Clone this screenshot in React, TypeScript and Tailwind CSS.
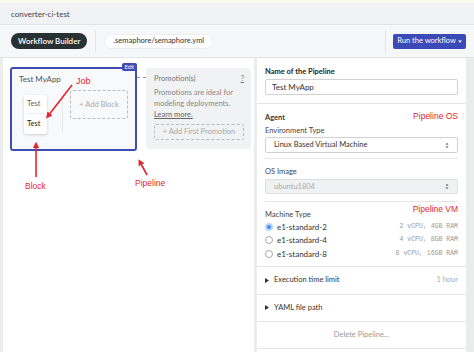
import React from 'react';

const font = { fontFamily: 'Lato, "Open Sans", sans-serif' };

const machines = [
  { name: 'e1-standard-2', spec: '2 vCPU, 4GB RAM', checked: true },
  { name: 'e1-standard-4', spec: '4 vCPU, 8GB RAM', checked: false },
  { name: 'e1-standard-8', spec: '8 vCPU, 16GB RAM', checked: false },
];

const Annotation: React.FC<{ className: string; children: React.ReactNode }> = ({ className, children }) => (
  <span className={`absolute text-[8.5px] leading-none text-[#e3262d] font-['Liberation_Sans',Arial,sans-serif] ${className}`}>
    {children}
  </span>
);

const SelectArrows = () => (
  <svg width="4" height="7" viewBox="0 0 4 7" className="text-[#444]">
    <path d="M0.5 2.6 L2 1 L3.5 2.6 Z M0.5 4.4 L2 6 L3.5 4.4 Z" fill="currentColor" />
  </svg>
);

const App: React.FC = () => {
  return (
    <div className="w-[474px] h-[352px] overflow-hidden bg-[#ebecec] flex flex-col text-[#333]" style={font}>
      <div className="h-[3px] bg-[#fbf8ec]" />
      <div className="h-[22px] bg-[#f1f2f3] border-b border-[#e0e2e3] px-[11px] flex items-center text-[8px] text-[#444]">
        converter-ci-test
      </div>

      {/* toolbar */}
      <div className="h-[33px] bg-[#f6f7f8] border-b border-[#e0e2e3] flex items-center pl-[11px] pr-[8px]">
        <div className="h-[16px] px-[7px] rounded-full bg-[#283234] text-white text-[8px] font-semibold flex items-center">
          Workflow Builder
        </div>
        <div className="w-px h-[22px] bg-[#e2e4e5] mx-[8px]" />
        <div className="h-[15px] px-[8px] rounded-full bg-white border border-[#eceeef] text-[7.5px] text-[#333] flex items-center">
          .semaphore/semaphore.yml
        </div>
        <div className="flex-1" />
        <div className="w-px h-[22px] bg-[#e2e4e5] mr-[7px]" />
        <div className="h-[15px] w-[73px] rounded-[2px] bg-[#3b4ab6] text-white text-[7.5px] flex items-center justify-center gap-[2px]">
          Run the workflow
          <svg width="4" height="3" viewBox="0 0 4 3"><path d="M0 0.5 H4 L2 2.8 Z" fill="white" /></svg>
        </div>
      </div>

      <div className="flex-1 flex">
        {/* canvas */}
        <div className="relative ml-[3px] w-[251px] bg-white pt-[9px] pl-[7px]">
          <div className="flex items-start">
            <div className="relative w-[127px] h-[84px] border-2 border-[#3f4db3] rounded-[3px] bg-[#f8f9fa] pl-[7px] pt-[5px]">
              <div className="absolute -top-[6px] -right-[2px] h-[8px] px-[3px] rounded-[2px] bg-[#3f4db3] text-white text-[5.5px] leading-[8px]">
                Edit
              </div>
              <div className="text-[8px] text-[#555] leading-[10px]">Test MyApp</div>
              <div className="flex items-start mt-[11px]">
                <div className="ml-[5px] w-[23px] h-[39px] bg-white rounded-[2px] shadow-[0_1px_3px_rgba(0,0,0,0.18)] flex flex-col px-[3px]">
                  <div className="h-[19px] flex items-center text-[7.5px] text-[#666] border-b border-[#eee]">Test</div>
                  <div className="h-[19px] flex items-center text-[7.5px] text-[#222]">Test</div>
                </div>
                <div className="w-px h-[38px] bg-[#e8e9ea] ml-[15px]" />
                <div className="ml-[7px] -mt-[5px] w-[58px] h-[29px] border border-dashed border-[#b9bcbe] rounded-[3px] flex items-center justify-center text-[7.5px] text-[#aaa]">
                  + Add Block
                </div>
              </div>
            </div>
            <div className="w-[9px] mt-[10px] border-t border-dashed border-[#999]" />
            <div className="mt-[1px] w-[105px] h-[81px] bg-[#f1f2f3] rounded-[3px] pl-[8px] pr-[7px] pt-[5px] text-[7.5px]">
              <div className="flex justify-between text-[#777] leading-[11px]">
                <span>Promotion(s)</span>
                <span className="underline">?</span>
              </div>
              <div className="mt-[3px] text-[#888] leading-[11px]">
                Promotions are ideal for<br />modeling deployments.<br />
                <span className="underline text-[#666]">Learn more.</span>
              </div>
              <div className="mt-[4px] h-[16px] border border-dashed border-[#b9bcbe] rounded-[2px] flex items-center justify-center text-[#aaa]">
                + Add First Promotion
              </div>
            </div>
          </div>

          {/* annotations */}
          <svg className="absolute inset-0 pointer-events-none" width="251" height="295">
            <defs>
              <marker id="ah" markerWidth="4" markerHeight="4" refX="2" refY="2" orient="auto">
                <path d="M0 0 L4 2 L0 4 Z" fill="#e3262d" />
              </marker>
            </defs>
            <line x1="69" y1="27" x2="45" y2="58" stroke="#e3262d" strokeWidth="1.6" markerEnd="url(#ah)" />
            <line x1="33" y1="119" x2="33" y2="87" stroke="#e3262d" strokeWidth="1.6" markerEnd="url(#ah)" />
            <line x1="144" y1="117" x2="137" y2="104" stroke="#e3262d" strokeWidth="1.6" markerEnd="url(#ah)" />
          </svg>
          <Annotation className="left-[73px] top-[19px] text-[9px]">Job</Annotation>
          <Annotation className="left-[22px] top-[124px]">Block</Annotation>
          <Annotation className="left-[132px] top-[121px]">Pipeline</Annotation>
        </div>

        {/* settings panel */}
        <div className="ml-[3px] w-[209px] bg-white text-[7.5px]">
          <div className="px-[8px] pt-[9px] pb-[8px] border-b border-[#e5e6e7]">
            <div className="font-bold leading-[10px] text-[#222]">Name of the Pipeline</div>
            <div className="mt-[2px] h-[16px] border border-[#cfd1d3] rounded-[2px] px-[6px] flex items-center text-[8px] text-[#333]">
              Test MyApp
            </div>
          </div>

          <div className="mx-[8px] pt-[9px] pb-[5px] border-b border-[#e5e6e7]">
            <div className="flex justify-between items-center leading-[10px]">
              <span className="font-semibold text-[#222]">Agent</span>
              <span className="-mt-[4px] text-[8.5px] text-[#e3262d] font-['Liberation_Sans',Arial,sans-serif]">Pipeline OS</span>
            </div>
            <div className="mt-[3px] leading-[10px] text-[#444]">Environment Type</div>
            <div className="mt-[1px] h-[16px] border border-[#cfd1d3] rounded-[2px] px-[8px] flex items-center justify-between text-[#333]">
              Linux Based Virtual Machine
              <SelectArrows />
            </div>
          </div>

          <div className="mx-[8px] pt-[8px] pb-[7px] border-b border-[#e5e6e7]">
            <div className="leading-[10px] text-[#444]">OS Image</div>
            <div className="mt-[2px] h-[15px] border border-[#dcdedf] bg-[#f0f1f2] rounded-[2px] px-[8px] flex items-center justify-between text-[#aaa]">
              ubuntu1804
              <SelectArrows />
            </div>
          </div>

          <div className="px-[8px] pt-[1px] pb-[5px] border-b border-[#e5e6e7]">
            <div className="h-[17px] flex justify-between">
              <span className="self-end leading-[10px] text-[#444]">Machine Type</span>
              <span className="self-start text-[8.5px] text-[#e3262d] font-['Liberation_Sans',Arial,sans-serif]">Pipeline VM</span>
            </div>
            {machines.map((m) => (
              <div key={m.name} className="h-[13.5px] flex items-center">
                <span
                  className={`w-[8px] h-[8px] rounded-full mr-[4px] ${
                    m.checked ? 'bg-[#3d8af7] border-[2px] border-[#bcd6fb]' : 'border border-[#aaa] bg-white'
                  }`}
                />
                <span className="text-[8px] text-[#333]">{m.name}</span>
                <span className="ml-auto text-[6.5px] text-[#999] font-['Liberation_Mono',monospace]">{m.spec}</span>
              </div>
            ))}
          </div>

          <div className="h-[28px] px-[8px] flex items-center border-b border-[#e5e6e7]">
            <svg width="4" height="5" viewBox="0 0 4 5" className="mr-[5px]"><path d="M0 0 L4 2.5 L0 5 Z" fill="#333" /></svg>
            <span className="text-[#333]">Execution time limit</span>
            <span className="ml-auto text-[#aaa]">1 hour</span>
          </div>
          <div className="h-[27px] px-[8px] flex items-center border-b border-[#e5e6e7]">
            <svg width="4" height="5" viewBox="0 0 4 5" className="mr-[5px]"><path d="M0 0 L4 2.5 L0 5 Z" fill="#333" /></svg>
            <span className="text-[#333]">YAML file path</span>
          </div>
          <div className="h-[27px] flex items-center justify-center border-b border-[#e5e6e7] text-[#999]">
            Delete Pipeline...
          </div>
        </div>
      </div>
    </div>
  );
};

export default App;
